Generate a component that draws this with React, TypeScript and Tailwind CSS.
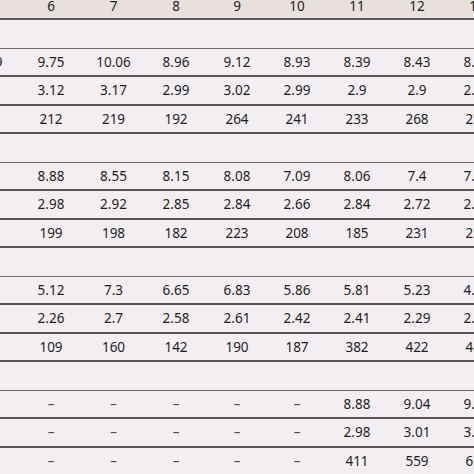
const cols = [62, 62, 63, 62, 60, 60, 60, 60, 60];

type Row = { cells: string[] | null };

const rows: Row[] = [
  { cells: null },
  { cells: ['8.89', '9.75', '10.06', '8.96', '9.12', '8.93', '8.39', '8.43', '8.34'] },
  { cells: ['', '3.12', '3.17', '2.99', '3.02', '2.99', '2.9', '2.9', '2.85'] },
  { cells: ['', '212', '219', '192', '264', '241', '233', '268', '275'] },
  { cells: null },
  { cells: ['', '8.88', '8.55', '8.15', '8.08', '7.09', '8.06', '7.4', '7.65'] },
  { cells: ['', '2.98', '2.92', '2.85', '2.84', '2.66', '2.84', '2.72', '2.76'] },
  { cells: ['', '199', '198', '182', '223', '208', '185', '231', '226'] },
  { cells: null },
  { cells: ['', '5.12', '7.3', '6.65', '6.83', '5.86', '5.81', '5.23', '4.98'] },
  { cells: ['', '2.26', '2.7', '2.58', '2.61', '2.42', '2.41', '2.29', '2.23'] },
  { cells: ['', '109', '160', '142', '190', '187', '382', '422', '451'] },
  { cells: null },
  { cells: ['', '–', '–', '–', '–', '–', '8.88', '9.04', '9.12'] },
  { cells: ['', '–', '–', '–', '–', '–', '2.98', '3.01', '3.03'] },
  { cells: ['', '–', '–', '–', '–', '–', '411', '559', '612'] },
];

const header = ['5', '6', '7', '8', '9', '10', '11', '12', '13'];

function Cells({ cells }: { cells: string[] }) {
  return (
    <>
      {cells.map((c, i) => (
        <div
          key={i}
          className={`shrink-0 text-center ${c === '–' ? 'text-[#4f4f4f]' : ''}`}
          style={{ width: cols[i] }}
        >
          {c}
        </div>
      ))}
    </>
  );
}

export default function App() {
  return (
    <div className="w-[474px] h-[474px] overflow-hidden bg-[#f3eef1]">
      <div
        className="ml-[-42px] mt-[-8.5px] text-[13.5px] text-[#1e1e1e] whitespace-nowrap"
        style={{ fontFamily: '"Noto Sans", "Open Sans", sans-serif' }}
      >
        <div className="flex items-center h-[28.53px] pt-[2px] bg-[#e7e0dd] border-b-2 border-[#585858]">
          <Cells cells={header} />
        </div>
        {rows.map((r, i) =>
          r.cells ? (
            <div key={i} className="flex items-center h-[28.53px] border-b-2 border-[#555555]">
              <Cells cells={r.cells} />
            </div>
          ) : (
            <div key={i} className="h-[28.53px] border-b-[1.5px] border-[#6a6a6a]" />
          )
        )}
      </div>
    </div>
  );
}
